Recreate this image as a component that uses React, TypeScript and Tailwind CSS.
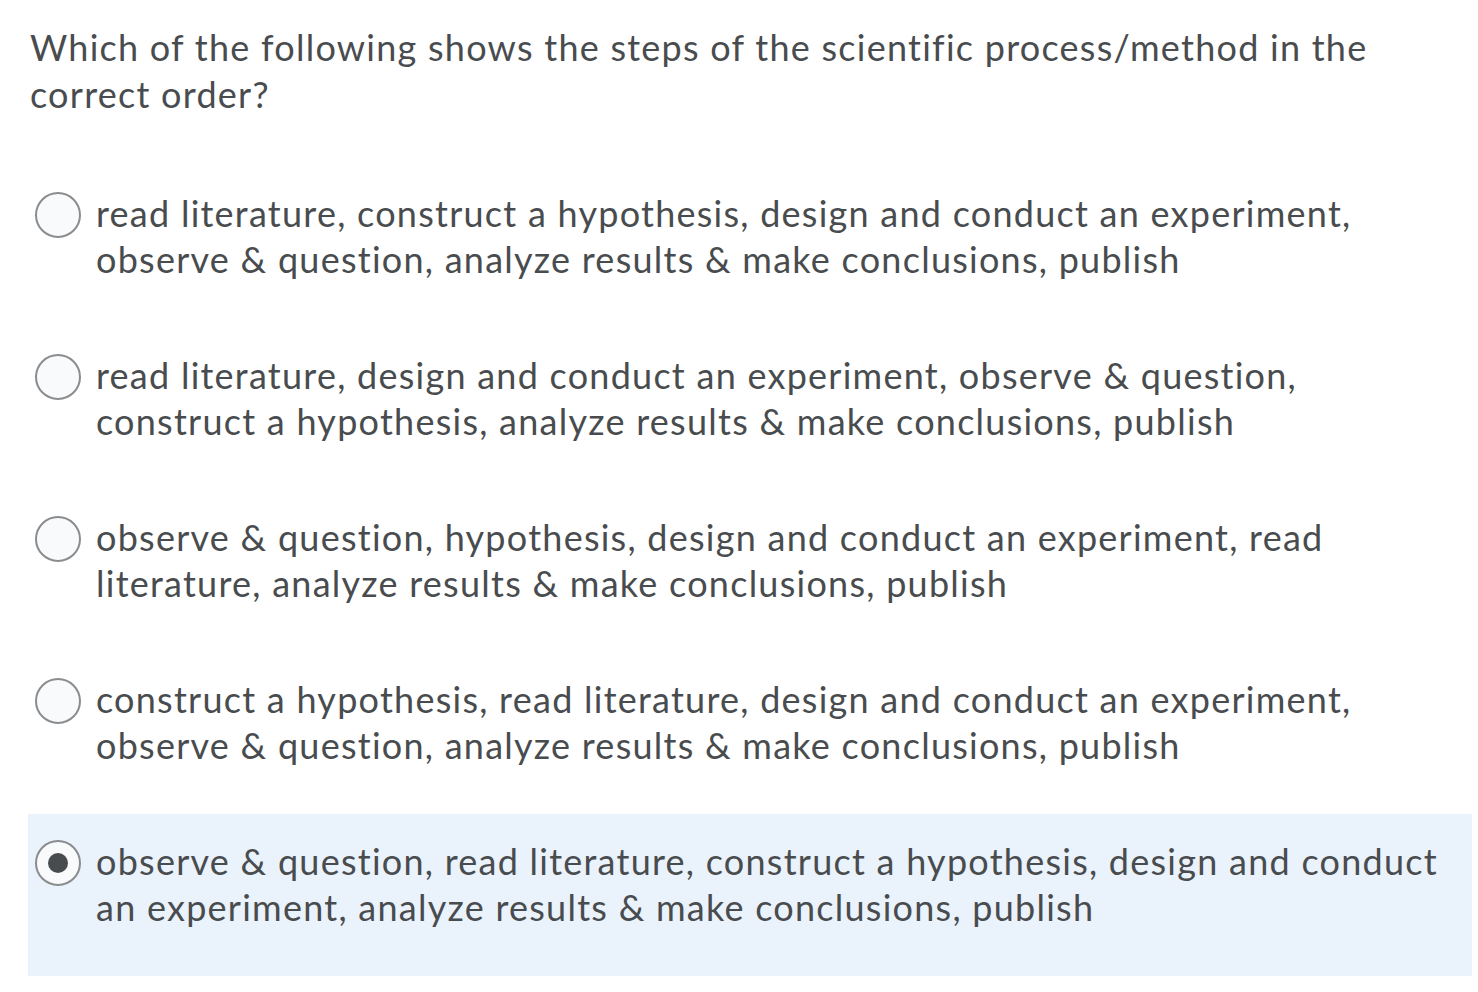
import React from "react";

const options = [
  "read literature, construct a hypothesis, design and conduct an experiment, observe & question, analyze results & make conclusions, publish",
  "read literature, design and conduct an experiment, observe & question, construct a hypothesis, analyze results & make conclusions, publish",
  "observe & question, hypothesis, design and conduct an experiment, read literature, analyze results & make conclusions, publish",
  "construct a hypothesis, read literature, design and conduct an experiment, observe & question, analyze results & make conclusions, publish",
  "observe & question, read literature, construct a hypothesis, design and conduct an experiment, analyze results & make conclusions, publish",
];

export default function App() {
  return (
    <div
      className="w-[1478px] h-[992px] bg-white text-[#494c4e] overflow-hidden tracking-[1.25px]"
      style={{ fontFamily: "Lato, 'Noto Sans', sans-serif" }}
    >
      <div className="pl-[30px] pr-[20px] pt-[24px] text-[36px] leading-[47px]">
        Which of the following shows the steps of the scientific process/method in the correct order?
      </div>
      <div className="mt-[48px] ml-[28px] w-[1444px] flex flex-col">
        {options.map((t, i) => {
          const sel = i === 4;
          return (
            <div
              key={i}
              className={`h-[162px] flex items-start pt-[26px] ${sel ? "bg-[#eaf2fc]" : ""}`}
            >
              <div className="ml-[7px] w-[46px] h-[46px] shrink-0 rounded-full border-2 border-[#8a8c8e] bg-[#f9fafc] flex items-center justify-center">
                {sel && <div className="w-[20px] h-[20px] rounded-full bg-[#494c4e]" />}
              </div>
              <div className="ml-[15px] mt-[-2px] pr-[20px] text-[36px] leading-[46px]">{t}</div>
            </div>
          );
        })}
      </div>
    </div>
  );
}
